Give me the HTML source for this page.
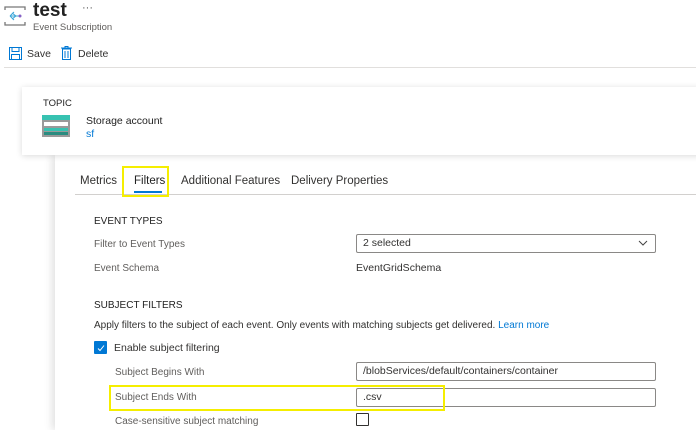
<html><head><style>
body{margin:0;width:696px;height:430px;overflow:hidden;background:#fff;font-family:"Liberation Sans",sans-serif;color:#323130;position:relative}
div,span{position:absolute}
.t{font-size:11px;white-space:nowrap}
.lab{font-size:10px;color:#605e5c;white-space:nowrap}
.inp{border:1px solid #8a8886;border-radius:2px;background:#fff;font-size:10.5px;line-height:17px;padding-left:6px;box-sizing:border-box;height:19px}
</style></head><body>
<svg style="position:absolute;left:4px;top:6px" width="22" height="20" viewBox="0 0 22 20"><path d="M1 4V1h20v3M1 16v3h20v-3" stroke="#777" stroke-width="1.3" fill="none"/><path d="M6 10h10M8 7l4 3-4 3M6 10l4-4M6 10l4 4" stroke="#3aa6d8" stroke-width="1" fill="none"/><circle cx="16" cy="10" r="1.5" fill="#8661c5"/></svg>
<div style="left:33px;top:0px;font-size:19px;font-weight:bold;color:#222">test</div>
<div style="left:82px;top:2px;font-size:11px;color:#555">···</div>
<div class="lab" style="left:33px;top:22px;font-size:9.5px">Event Subscription</div>
<svg style="position:absolute;left:9px;top:47px" width="13" height="13" viewBox="0 0 13 13"><rect x="0.5" y="0.5" width="12" height="12" fill="none" stroke="#0078d4"/><rect x="3" y="0.5" width="7" height="4" fill="none" stroke="#0078d4"/><rect x="2.5" y="7.5" width="8" height="5" fill="none" stroke="#0078d4"/></svg>
<div class="t" style="left:27px;top:48px;font-size:10.5px">Save</div>
<svg style="position:absolute;left:61px;top:46px" width="11" height="14" viewBox="0 0 11 14"><path d="M0 2h11M4 2V0.5h3V2" stroke="#0078d4" fill="none"/><rect x="1.5" y="3" width="8" height="10.5" fill="none" stroke="#0078d4"/><path d="M4 5v7M7 5v7" stroke="#0078d4"/></svg>
<div class="t" style="left:78px;top:48px;font-size:10.5px">Delete</div>
<div style="left:4px;top:67px;width:692px;height:1px;background:#e1dfdd"></div>
<div style="left:55px;top:155px;width:641px;height:275px;background:#fff;box-shadow:-3px 0 8px rgba(0,0,0,0.12)"></div>
<div style="left:22px;top:87px;width:680px;height:68px;background:#fff;box-shadow:0 1px 6px rgba(0,0,0,0.15)"></div>
<div class="t" style="left:43px;top:98px;font-size:9.5px;color:#222">TOPIC</div>
<div style="left:42px;top:115px;width:28px;height:22px;background:#9a9a9a"></div>
<div style="left:42px;top:115px;width:28px;height:5px;background:#37c2b1"></div>
<div style="left:44px;top:122px;width:24px;height:4px;background:#fff"></div>
<div style="left:44px;top:128px;width:24px;height:3px;background:#37c2b1"></div>
<div style="left:44px;top:132px;width:24px;height:3px;background:#2a8c80"></div>
<div class="t" style="left:86px;top:115px;font-size:10.5px;color:#222">Storage account</div>
<div class="t" style="left:86px;top:128px;font-size:10.5px;color:#0078d4">sf</div>
<div style="left:75px;top:194px;width:621px;height:1px;background:#d2d0ce"></div>
<div class="t" style="left:80px;top:175px;font-size:11.5px">Metrics</div>
<div class="t" style="left:134px;top:175px;font-size:11.5px;color:#222">Filters</div>
<div style="left:134px;top:191px;width:28px;height:2px;background:#0078d4"></div>
<div class="t" style="left:181px;top:175px;font-size:11.5px">Additional Features</div>
<div class="t" style="left:291px;top:175px;font-size:11.5px">Delivery Properties</div>
<div style="left:122px;top:166px;width:43px;height:27px;border:2px solid #f5ee00"></div>
<div class="t" style="left:94px;top:216px;font-size:10px;color:#222">EVENT TYPES</div>
<div class="lab" style="left:94px;top:239px">Filter to Event Types</div>
<div class="inp" style="left:356px;top:234px;width:300px">2 selected</div>
<svg style="position:absolute;left:638px;top:239px" width="10" height="8"><path d="M1 2l4 4 4-4" stroke="#444" fill="none"/></svg>
<div class="lab" style="left:94px;top:263px">Event Schema</div>
<div class="t" style="left:356px;top:262px;font-size:10.5px">EventGridSchema</div>
<div class="t" style="left:94px;top:300px;font-size:10px;color:#222">SUBJECT FILTERS</div>
<div class="t" style="left:94px;top:320px;font-size:10px">Apply filters to the subject of each event. Only events with matching subjects get delivered. <span style="position:static;color:#0078d4">Learn more</span></div>
<div style="left:94px;top:341px;width:13px;height:13px;background:#0078d4;border-radius:1px"></div>
<svg style="position:absolute;left:95px;top:342px" width="12" height="12"><path d="M3 6.5l2 2 4-5" stroke="#fff" fill="none"/></svg>
<div class="t" style="left:114px;top:342px;font-size:10.5px">Enable subject filtering</div>
<div class="lab" style="left:115px;top:367px">Subject Begins With</div>
<div class="inp" style="left:356px;top:362px;width:300px">/blobServices/default/containers/container</div>
<div class="lab" style="left:115px;top:392px">Subject Ends With</div>
<div class="inp" style="left:356px;top:388px;width:300px">.csv</div>
<div style="left:109px;top:385px;width:332px;height:22px;border:2px solid #f5ee00"></div>
<div class="lab" style="left:115px;top:416px">Case-sensitive subject matching</div>
<div style="left:356px;top:413px;width:13px;height:13px;border:1px solid #323130;box-sizing:border-box;border-radius:1px"></div>
</body></html>
